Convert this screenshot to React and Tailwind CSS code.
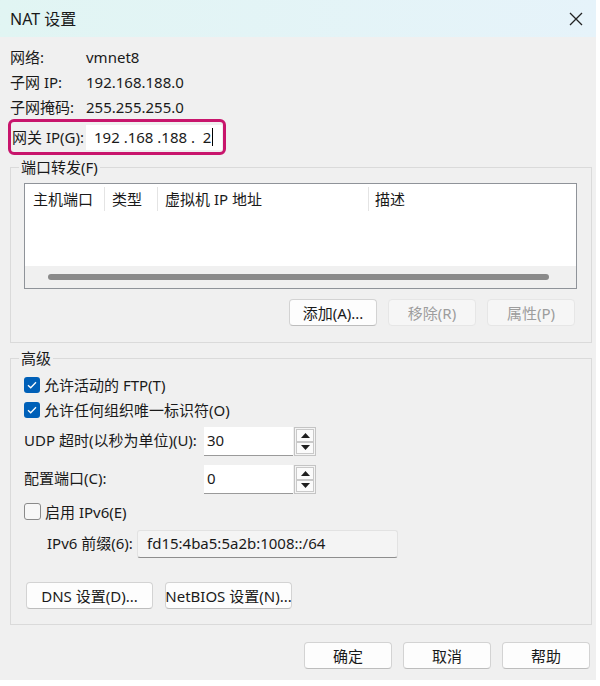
import clsx from "clsx";

const Btn = ({ children, disabled, primary, className }) => (
  <button
    className={clsx(
      "flex h-[27px] items-center justify-center whitespace-nowrap rounded-[4px] border text-[15px]",
      disabled
        ? "border-[#e6e6e6] bg-[#f6f6f6] text-[#9d9d9d]"
        : "border-[#d3d3d3] border-b-[#bdbdbd] bg-[#fdfdfd] text-[#1a1a1a]",
      primary && "border-[#3a8ad6] border-b-[#3a8ad6]",
      className
    )}
  >
    {children}
  </button>
);

const Check = ({ checked }) =>
  checked ? (
    <span className="flex h-[16px] w-[16px] items-center justify-center rounded-[3px] bg-[#0060b8]">
      <svg width="10" height="8" viewBox="0 0 10 8">
        <path d="M1 4.2 L3.7 6.8 L9 1.2" stroke="white" strokeWidth="1.3" fill="none" />
      </svg>
    </span>
  ) : (
    <span className="h-[17px] w-[17px] rounded-[3px] border border-[#8a8a8a] bg-[#f7f7f7]" />
  );

const Arrow = ({ up }) => (
  <svg width="9" height="5" viewBox="0 0 9 5">
    <path d={up ? "M0 5 L4.5 0 L9 5Z" : "M0 0 L4.5 5 L9 0Z"} fill="#1e1e1e" />
  </svg>
);

const Spin = ({ value }) => (
  <div className="flex h-[29px]">
    <div className="flex w-[89px] items-center border-b border-[#9a9a9a] bg-white pb-[3px] pl-[3px]">{value}</div>
    <div className="ml-[1px] flex w-[22px] flex-col border border-[#c4c4c4] bg-[#f4f4f4] p-[1px]">
      <div className="flex flex-1 items-center justify-center border border-[#c9c9c9] bg-[#fbfbfb]">
        <Arrow up />
      </div>
      <div className="flex flex-1 items-center justify-center border border-[#c9c9c9] bg-[#fbfbfb]">
        <Arrow />
      </div>
    </div>
  </div>
);

const InfoRow = ({ label, value }) => (
  <div className="flex h-[25px] items-center">
    <span className="w-[86px] pl-[10px]">{label}</span>
    <span>{value}</span>
  </div>
);

export default function App() {
  return (
    <div className="h-[686px] w-[600px] whitespace-nowrap bg-white font-['Noto_Sans','Noto_Sans_CJK_SC',sans-serif] text-[15px] leading-[20px] text-[#1a1a1a]">
      <div className="flex h-[680px] w-[596px] flex-col bg-[#f0f0f0]">
        <div className="flex h-[37px] items-center justify-between bg-linear-to-r from-[#e1f5f3] to-[#e6f3fa] pl-[10px] pr-[10px]">
          <span className="text-[16px]">NAT 设置</span>
          <svg width="14" height="14" viewBox="0 0 14 14" className="mr-[3px]">
            <path d="M1 1 L13 13 M13 1 L1 13" stroke="#222" strokeWidth="1.3" />
          </svg>
        </div>

        <div className="pt-[7px]">
          <InfoRow label="网络:" value="vmnet8" />
          <InfoRow label="子网 IP:" value="192.168.188.0" />
          <InfoRow label="子网掩码:" value="255.255.255.0" />
        </div>

        <div className="ml-[8px] flex h-[36px] w-[218px] items-center rounded-[6px] border-[3px] border-[#c8156c]">
          <span className="w-[75px] pl-[1px]">网关 IP(G):</span>
          <div className="flex h-[25px] w-[136px] items-center bg-white pl-[8px] whitespace-pre">
            192 .168 .188 .  2<span className="ml-[1px] h-[18px] w-px bg-black" />
          </div>
        </div>

        <fieldset className="ml-[10px] mt-[2px] w-[582px] border border-[#dadada] pb-[16px]">
          <legend className="ml-[8px] px-[2px]">端口转发(F)</legend>
          <div className="ml-[13px] mt-[6px] flex h-[106px] w-[553px] flex-col border border-[#8f9399] bg-white">
            <div className="flex h-[30px] items-center">
              <span className="w-[79px] pl-[8px]">主机端口</span>
              <span className="h-[24px] w-px bg-[#e4e4e4]" />
              <span className="w-[52px] pl-[7px]">类型</span>
              <span className="h-[24px] w-px bg-[#e4e4e4]" />
              <span className="w-[210px] pl-[7px]">虚拟机 IP 地址</span>
              <span className="h-[24px] w-px bg-[#e4e4e4]" />
              <span className="pl-[6px]">描述</span>
            </div>
            <div className="flex-1" />
            <div className="flex h-[22px] items-center bg-[#f0f0f0] pl-[23px]">
              <div className="h-[6px] w-[501px] rounded-full bg-[#8a8a8a]" />
            </div>
          </div>
          <div className="mr-[16px] mt-[10px] flex justify-end gap-[11px]">
            <Btn className="w-[88px]">添加(A)...</Btn>
            <Btn className="w-[88px]" disabled>
              移除(R)
            </Btn>
            <Btn className="w-[88px]" disabled>
              属性(P)
            </Btn>
          </div>
        </fieldset>

        <fieldset className="ml-[10px] mt-[5px] w-[582px] border border-[#dadada] pb-[15px]">
          <legend className="ml-[8px] px-[2px]">高级</legend>
          <div className="ml-[13px] mt-[4px]">
            <div className="flex h-[25px] items-center gap-[4px]">
              <Check checked />
              <span>允许活动的 FTP(T)</span>
            </div>
            <div className="flex h-[25px] items-center gap-[4px]">
              <Check checked />
              <span>允许任何组织唯一标识符(O)</span>
            </div>
            <div className="mt-[5px] flex items-center">
              <span className="w-[180px] pb-[3px]">UDP 超时(以秒为单位)(U):</span>
              <Spin value="30" />
            </div>
            <div className="mt-[9px] flex items-center">
              <span className="w-[180px] pb-[3px]">配置端口(C):</span>
              <Spin value="0" />
            </div>
            <div className="mt-[5px] flex h-[25px] items-center gap-[4px]">
              <Check />
              <span>启用 IPv6(E)</span>
            </div>
            <div className="mt-[6px] flex items-center">
              <span className="w-[113px] pb-[2px] pl-[23px]">IPv6 前缀(6):</span>
              <div className="flex h-[28px] w-[261px] items-center rounded-[3px] border border-[#e2e2e2] border-b-[#8e8e8e] bg-[#f4f4f4] pb-[3px] pl-[9px]">
                fd15:4ba5:5a2b:1008::/64
              </div>
            </div>
            <div className="ml-[2px] mt-[24px] flex gap-[12px]">
              <Btn className="h-[26px] w-[127px]">DNS 设置(D)...</Btn>
              <Btn className="h-[26px] w-[127px]">NetBIOS 设置(N)...</Btn>
            </div>
          </div>
        </fieldset>

        <div className="mr-[6px] mt-[17px] flex justify-end gap-[11px]">
          <Btn className="w-[88px]" primary>
            确定
          </Btn>
          <Btn className="w-[88px]">取消</Btn>
          <Btn className="w-[88px]">帮助</Btn>
        </div>
      </div>
    </div>
  );
}
